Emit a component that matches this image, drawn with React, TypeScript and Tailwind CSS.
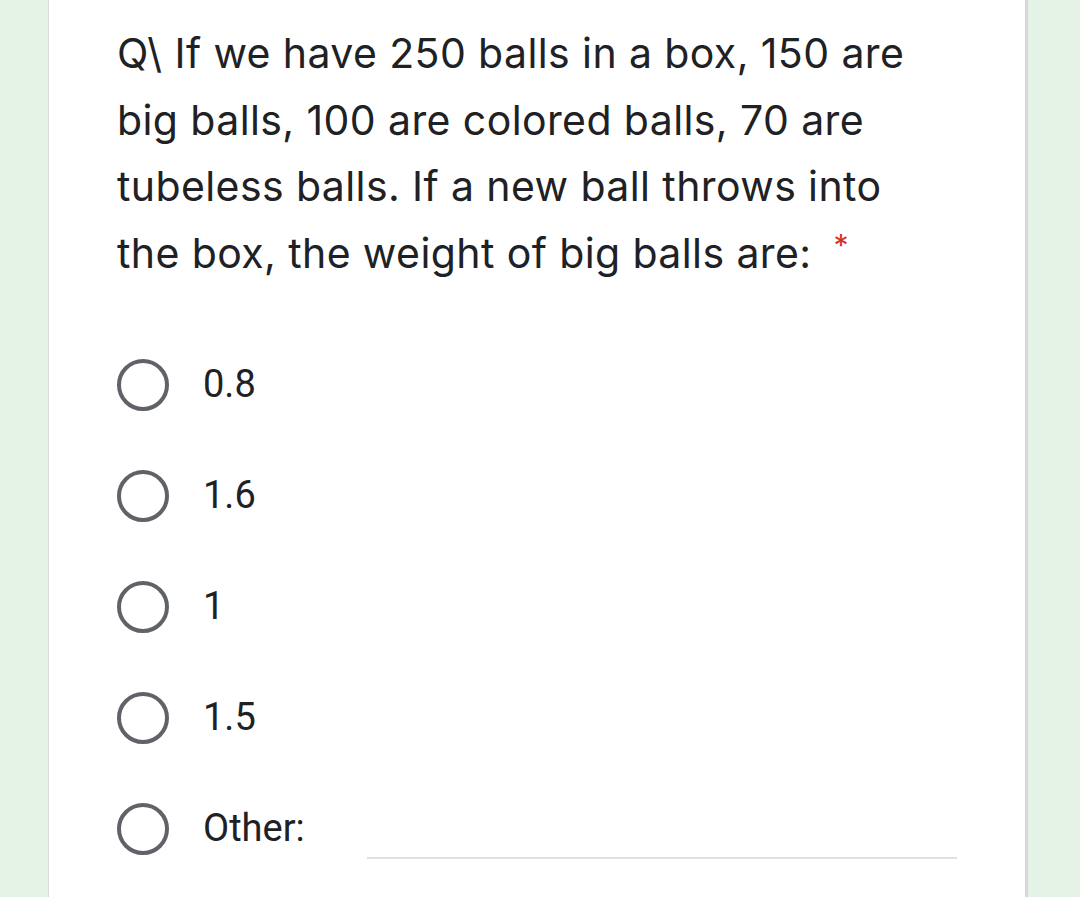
import React from "react";

const options = ["0.8", "1.6", "1", "1.5"];

const questionLines = [
  "Q\\ If we have 250 balls in a box, 150 are",
  "big balls, 100 are colored balls, 70 are",
  "tubeless balls. If a new ball throws into",
];

function Radio() {
  return <div className="w-[52px] h-[52px] rounded-full border-[4px] border-[#5f6368] shrink-0" />;
}

export default function App() {
  return (
    <div className="min-h-[897px] h-[897px] overflow-hidden bg-[#e4f3e5] flex">
      <div className="ml-[48px] w-[980px] bg-white border-l border-[#dadce0] border-r-[3px] border-r-[#d9d7dd] pl-[68px] pr-[20px] pt-[20px]">
        <div
          className="text-[41px] leading-[66.5px] text-[#202124] whitespace-nowrap tracking-[0.4px]"
          style={{ fontFamily: 'Inter, "Open Sans", sans-serif' }}
        >
          {questionLines.map((l) => (
            <div key={l}>{l}</div>
          ))}
          <div>
            the box, the weight of big balls are:
            <span className="text-[#d93025] ml-[22px] relative -top-[12px] text-[30px]">*</span>
          </div>
        </div>
        <div
          className="mt-[68px] flex flex-col gap-[58px]"
          style={{ fontFamily: 'Roboto, "Liberation Sans", sans-serif' }}
        >
          {options.map((o) => (
            <div key={o} className="flex items-center gap-[34px] h-[53px]">
              <Radio />
              <span className="text-[38px] text-[#202124]">{o}</span>
            </div>
          ))}
          <div className="flex items-center gap-[34px] h-[53px]">
            <Radio />
            <span className="text-[38px] text-[#202124]">Other:</span>
            <div className="ml-[28px] mt-[58px] h-[2px] w-[590px] bg-[#e0e0e0]" />
          </div>
        </div>
      </div>
    </div>
  );
}
